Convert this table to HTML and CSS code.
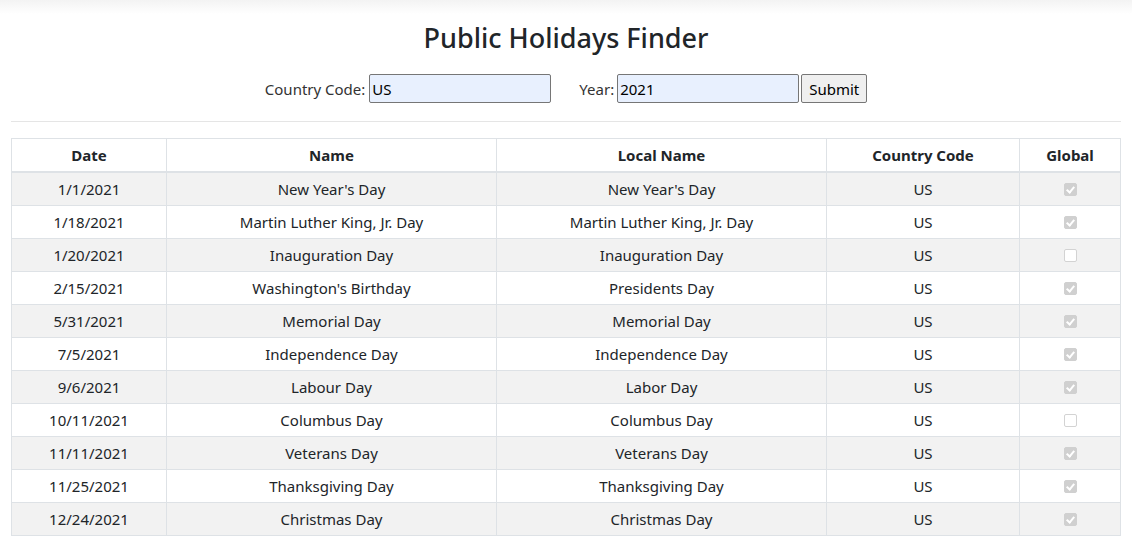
FILE: index.html
```html
<!DOCTYPE html>
<html lang="en">
<head>
<meta charset="utf-8">
<title>Public Holidays Finder</title>
<link rel="stylesheet" href="styles.css">
</head>
<body>
<div class="topshade"></div>
<main class="page">
  <h1 class="title">Public Holidays Finder</h1>
  <form class="search">
    <label class="field">Country Code: <input class="txt" type="text" value="US"></label>
    <label class="field year">Year: <input class="txt" type="text" value="2021"></label>
    <button class="btn" type="button">Submit</button>
  </form>
  <hr class="rule">
  <table class="holidays">
    <thead>
      <tr><th class="c-date">Date</th><th class="c-name">Name</th><th class="c-local">Local Name</th><th class="c-cc">Country Code</th><th class="c-gl">Global</th></tr>
    </thead>
    <tbody>
      <tr><td>1/1/2021</td><td>New Year's Day</td><td>New Year's Day</td><td>US</td><td><span class="cb on"></span></td></tr>
      <tr><td>1/18/2021</td><td>Martin Luther King, Jr. Day</td><td>Martin Luther King, Jr. Day</td><td>US</td><td><span class="cb on"></span></td></tr>
      <tr><td>1/20/2021</td><td>Inauguration Day</td><td>Inauguration Day</td><td>US</td><td><span class="cb"></span></td></tr>
      <tr><td>2/15/2021</td><td>Washington's Birthday</td><td>Presidents Day</td><td>US</td><td><span class="cb on"></span></td></tr>
      <tr><td>5/31/2021</td><td>Memorial Day</td><td>Memorial Day</td><td>US</td><td><span class="cb on"></span></td></tr>
      <tr><td>7/5/2021</td><td>Independence Day</td><td>Independence Day</td><td>US</td><td><span class="cb on"></span></td></tr>
      <tr><td>9/6/2021</td><td>Labour Day</td><td>Labor Day</td><td>US</td><td><span class="cb on"></span></td></tr>
      <tr><td>10/11/2021</td><td>Columbus Day</td><td>Columbus Day</td><td>US</td><td><span class="cb"></span></td></tr>
      <tr><td>11/11/2021</td><td>Veterans Day</td><td>Veterans Day</td><td>US</td><td><span class="cb on"></span></td></tr>
      <tr><td>11/25/2021</td><td>Thanksgiving Day</td><td>Thanksgiving Day</td><td>US</td><td><span class="cb on"></span></td></tr>
      <tr><td>12/24/2021</td><td>Christmas Day</td><td>Christmas Day</td><td>US</td><td><span class="cb on"></span></td></tr>
    </tbody>
  </table>
</main>
</body>
</html>
```
FILE: styles.css
```css
html, body {
  margin: 0;
  padding: 0;
  background: #fff;
}
body {
  font-family: "Noto Sans", "Open Sans", sans-serif;
  font-size: 15px;
  color: #212529;
}
.topshade {
  height: 14px;
  background: linear-gradient(to bottom, #f3f3f3, #ffffff);
}
.page {
  padding: 0 11px;
}
.title {
  margin: 6px 0 0;
  height: 36px;
  line-height: 36px;
  text-align: center;
  font-size: 27px;
  font-weight: 500;
  color: #212529;
}
.search {
  display: flex;
  justify-content: center;
  align-items: center;
  margin-top: 18px;
  height: 29px;
}
.field {
  display: flex;
  align-items: center;
  gap: 4px;
  color: #333;
}
.field.year {
  margin-left: 28px;
  gap: 3px;
}
.txt {
  box-sizing: border-box;
  width: 182px;
  height: 29px;
  margin: 0;
  padding: 1px 2px;
  border: 1px solid #767676;
  border-radius: 2px;
  background: #e8f0fe;
  font-family: inherit;
  font-size: 15px;
  color: #000;
}
.btn {
  box-sizing: border-box;
  height: 29px;
  width: 66px;
  margin-left: 2px;
  padding: 0;
  border: 1px solid #767676;
  border-radius: 2px;
  background: #efefef;
  font-family: inherit;
  font-size: 15px;
  color: #000;
}
.rule {
  margin: 18px 0 16px;
  border: 0;
  border-top: 1px solid #e5e5e5;
}
.holidays {
  width: 100%;
  border-collapse: collapse;
  border: 1px solid #dee2e6;
  text-align: center;
}
.holidays th,
.holidays td {
  border: 1px solid #dee2e6;
  padding: 0;
  height: 32px;
  vertical-align: middle;
}
.holidays th {
  font-weight: 700;
  height: 32px;
  border-bottom: 2px solid #dee2e6;
}
.c-date { width: 154px; }
.c-name { width: 329px; }
.c-local { width: 329px; }
.c-cc { width: 192px; }
.holidays tbody tr:nth-child(odd) {
  background: #f2f2f2;
}
.cb {
  display: inline-block;
  box-sizing: border-box;
  width: 13px;
  height: 13px;
  border: 1px solid #d3d3d3;
  border-radius: 2px;
  background: #fff;
  vertical-align: middle;
  position: relative;
  top: -1px;
}
.cb.on {
  border-color: #d0d0d0;
  background: #d0d0d0;
}
.cb.on::after {
  content: "";
  position: absolute;
  left: 3px;
  top: 1px;
  width: 3px;
  height: 6px;
  border: solid #fff;
  border-width: 0 2px 2px 0;
  transform: rotate(40deg);
}
```
